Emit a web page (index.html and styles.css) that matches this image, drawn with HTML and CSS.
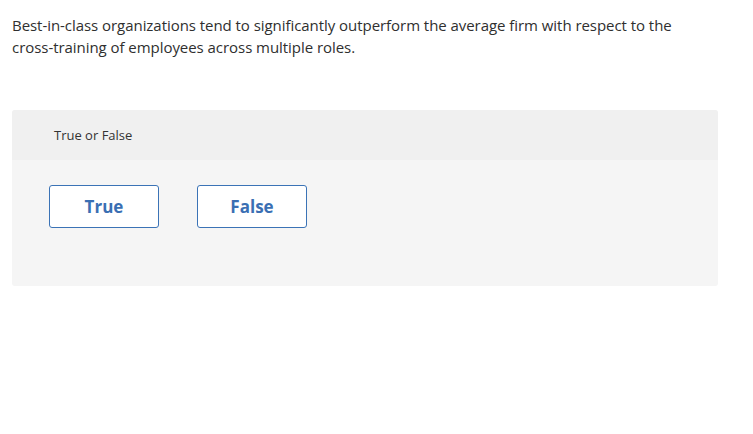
FILE: index.html
```html
<!DOCTYPE html>
<html>
<head>
<meta charset="utf-8">
<link rel="stylesheet" href="styles.css">
</head>
<body>
<div class="page">
  <p class="question">Best-in-class organizations tend to significantly outperform the average firm with respect to the cross-training of employees across multiple roles.</p>
  <div class="panel">
    <div class="panel-head">True or False</div>
    <div class="panel-body">
      <button class="choice">True</button>
      <button class="choice">False</button>
    </div>
  </div>
</div>
</body>
</html>
```
FILE: styles.css
```css
html, body {
  margin: 0;
  padding: 0;
  background: #fff;
}
.page {
  padding: 14px 35px 0 12px;
  font-family: "Open Sans", sans-serif;
  color: #333;
}
.question {
  margin: 0;
  max-width: 675px;
  font-size: 15px;
  letter-spacing: -0.05px;
  line-height: 22px;
  color: #2f2f2f;
}
.panel {
  margin-top: 52px;
  border-radius: 3px;
  overflow: hidden;
  background: #f5f5f5;
}
.panel-head {
  height: 50px;
  display: flex;
  align-items: center;
  padding-left: 42px;
  background: #f0f0f0;
  font-size: 13px;
  color: #333;
}
.panel-body {
  height: 126px;
  box-sizing: border-box;
  padding: 25px 0 0 37px;
  display: flex;
  align-items: flex-start;
  gap: 38px;
}
.choice {
  width: 110px;
  height: 43px;
  box-sizing: border-box;
  border: 1px solid #3b73b6;
  border-radius: 3px;
  background: #fff;
  color: #3a6fb3;
  font-family: "Open Sans", sans-serif;
  font-weight: 700;
  font-size: 17px;
  padding: 0;
}
```
